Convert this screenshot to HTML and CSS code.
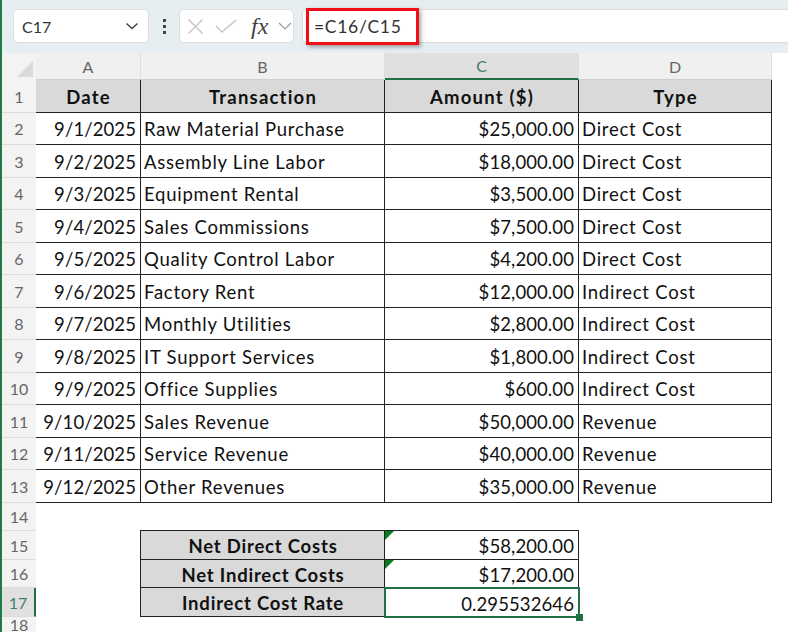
FILE: index.html
```html
<!DOCTYPE html>
<html lang="en">
<head>
    <meta charset="UTF-8">
    <title>Indirect Cost Rate</title>
    <link rel="stylesheet" href="styles.css">
</head>
<body>
    <div class="app">
        <div class="formula-bar">
            <div class="name-box">
                <span>C17</span>
                <svg class="chev" width="14" height="8" viewBox="0 0 14 8"><path d="M1.5 1.5 7 6.5l5.5-5" fill="none" stroke="#444" stroke-width="1.5"/></svg>
            </div>
            <div class="dots"><i></i><i></i><i></i></div>
            <div class="func-box">
                <svg width="17" height="17" viewBox="0 0 17 17"><path d="M1.5 1.5l14 14M15.500 1.500l-14 14" fill="none" stroke="#c4c4c4" stroke-width="1.4"/></svg>
                <svg class="check" width="24" height="16" viewBox="0 0 24 16"><path d="M2 8l6 6L22 2" fill="none" stroke="#c4c4c4" stroke-width="1.4"/></svg>
                <span class="fx">fx</span>
                <svg width="14" height="8" viewBox="0 0 14 8"><path d="M1 1l6 6 6-6" fill="none" stroke="#999" stroke-width="1.2"/></svg>
            </div>
            <div class="formula-box">
                <span class="formula">=C16/C15</span>
            </div>
        </div>

        <div class="sheet">
            <div class="corner"><svg width="16" height="16" viewBox="0 0 16 16"><path d="M16 0v16H0z" fill="#dadada"/></svg></div>
            <div class="col-head">A</div>
            <div class="col-head">B</div>
            <div class="col-head active">C</div>
            <div class="col-head">D</div>
            <div class="blank"></div>

            <div class="row-head">1</div>
            <div class="cell head">Date</div>
            <div class="cell head">Transaction</div>
            <div class="cell head">Amount ($)</div>
            <div class="cell head">Type</div>
            <div class="blank"></div>

            <div class="row-head">2</div>
            <div class="cell num">9/1/2025</div>
            <div class="cell">Raw Material Purchase</div>
            <div class="cell num">$25,000.00</div>
            <div class="cell">Direct Cost</div>
            <div class="blank"></div>

            <div class="row-head">3</div>
            <div class="cell num">9/2/2025</div>
            <div class="cell">Assembly Line Labor</div>
            <div class="cell num">$18,000.00</div>
            <div class="cell">Direct Cost</div>
            <div class="blank"></div>

            <div class="row-head">4</div>
            <div class="cell num">9/3/2025</div>
            <div class="cell">Equipment Rental</div>
            <div class="cell num">$3,500.00</div>
            <div class="cell">Direct Cost</div>
            <div class="blank"></div>

            <div class="row-head">5</div>
            <div class="cell num">9/4/2025</div>
            <div class="cell">Sales Commissions</div>
            <div class="cell num">$7,500.00</div>
            <div class="cell">Direct Cost</div>
            <div class="blank"></div>

            <div class="row-head">6</div>
            <div class="cell num">9/5/2025</div>
            <div class="cell">Quality Control Labor</div>
            <div class="cell num">$4,200.00</div>
            <div class="cell">Direct Cost</div>
            <div class="blank"></div>

            <div class="row-head">7</div>
            <div class="cell num">9/6/2025</div>
            <div class="cell">Factory Rent</div>
            <div class="cell num">$12,000.00</div>
            <div class="cell">Indirect Cost</div>
            <div class="blank"></div>

            <div class="row-head">8</div>
            <div class="cell num">9/7/2025</div>
            <div class="cell">Monthly Utilities</div>
            <div class="cell num">$2,800.00</div>
            <div class="cell">Indirect Cost</div>
            <div class="blank"></div>

            <div class="row-head">9</div>
            <div class="cell num">9/8/2025</div>
            <div class="cell">IT Support Services</div>
            <div class="cell num">$1,800.00</div>
            <div class="cell">Indirect Cost</div>
            <div class="blank"></div>

            <div class="row-head">10</div>
            <div class="cell num">9/9/2025</div>
            <div class="cell">Office Supplies</div>
            <div class="cell num">$600.00</div>
            <div class="cell">Indirect Cost</div>
            <div class="blank"></div>

            <div class="row-head">11</div>
            <div class="cell num">9/10/2025</div>
            <div class="cell">Sales Revenue</div>
            <div class="cell num">$50,000.00</div>
            <div class="cell">Revenue</div>
            <div class="blank"></div>

            <div class="row-head">12</div>
            <div class="cell num">9/11/2025</div>
            <div class="cell">Service Revenue</div>
            <div class="cell num">$40,000.00</div>
            <div class="cell">Revenue</div>
            <div class="blank"></div>

            <div class="row-head">13</div>
            <div class="cell num">9/12/2025</div>
            <div class="cell">Other Revenues</div>
            <div class="cell num">$35,000.00</div>
            <div class="cell">Revenue</div>
            <div class="blank"></div>

            <div class="row-head">14</div>
            <div class="blank wide"></div>

            <div class="row-head">15</div>
            <div class="blank"></div>
            <div class="cell head sum">Net Direct Costs</div>
            <div class="cell num sum flag">$58,200.00</div>
            <div class="blank span2"></div>

            <div class="row-head">16</div>
            <div class="blank"></div>
            <div class="cell head sum">Net Indirect Costs</div>
            <div class="cell num sum flag">$17,200.00</div>
            <div class="blank span2"></div>

            <div class="row-head selected">17</div>
            <div class="blank"></div>
            <div class="cell head sum">Indirect Cost Rate</div>
            <div class="cell num sum picked">0.295532646<b class="handle"></b></div>
            <div class="blank span2"></div>

            <div class="row-head">18</div>
            <div class="blank wide"></div>
        </div>
    </div>
</body>
</html>
```

FILE: styles.css
```css
html, body {
    margin: 0;
    padding: 0;
}
body {
    width: 788px;
    height: 632px;
    overflow: hidden;
    background-color: white;
    font-family: Lato, "Open Sans", sans-serif;
    color: #111;
}
.app {
    border-left: 2px solid #1f7a4a;
    height: 632px;
    box-sizing: border-box;
}
.formula-bar {
    height: 53px;
    box-sizing: border-box;
    padding: 9px 0 10px 11px;
    background-color: #e6eef1;
    display: flex;
    align-items: stretch;
}
.name-box {
    width: 136px;
    box-sizing: border-box;
    padding: 0 9px 0 8px;
    background-color: white;
    border: 1px solid #dcdfe0;
    border-radius: 5px;
    display: flex;
    align-items: center;
    justify-content: space-between;
    font-size: 16px;
    color: #333;
}
.dots {
    width: 30px;
    display: flex;
    flex-direction: column;
    align-items: center;
    justify-content: center;
    gap: 3px;
}
.dots i {
    width: 3px;
    height: 3px;
    background-color: #444;
}
.func-box {
    width: 115px;
    box-sizing: border-box;
    padding: 0 1px 0 7px;
    background-color: white;
    border: 1px solid #dcdfe0;
    border-radius: 5px;
    display: flex;
    align-items: center;
    justify-content: space-between;
}
.fx {
    font-family: "Liberation Serif", serif;
    font-style: italic;
    font-size: 24px;
    line-height: 1;
    color: #444;
    margin-left: 4px;
}
.formula-box {
    flex: 1;
    margin-left: 8px;
    padding-left: 3px;
    background-color: white;
    border-top: 1px solid #d8dcdd;
    border-bottom: 1px solid #d8dcdd;
    border-left: 1px solid #d8dcdd;
    border-radius: 5px 0 0 5px;
    display: flex;
    align-items: center;
}
.formula {
    width: 113px;
    height: 37px;
    box-sizing: border-box;
    padding-left: 5px;
    border: 3px solid #ee0f17;
    box-shadow: 2px 2px 4px rgba(0,0,0,0.35);
    display: flex;
    align-items: center;
    font-size: 17.5px;
    letter-spacing: 0.7px;
    color: #333;
}
.sheet {
    display: grid;
    grid-template-columns: 34px 105px 244px 194px 193px 18px;
    grid-template-rows: 27px 33px 32px 33px 32px 33px 32px 33px 32px 33px 32px 33px 32px 33px 28px 29px 28px 29px 16px;
}
.corner {
    background-color: #f3f3f3;
    display: flex;
    align-items: flex-end;
    justify-content: flex-end;
    padding: 0 3px 3px 0;
}
.col-head {
    background-color: #f0f0f0;
    border-right: 1px solid #dddddd;
    border-bottom: 1px solid #cfcfcf;
    display: flex;
    align-items: center;
    justify-content: center;
    font-size: 16px;
    color: #666;
}
.col-head.active {
    background-color: #e0e0e0;
    border-bottom: 2px solid #1f7145;
    color: #3f7f5f;
}
.row-head {
    background-color: #f3f3f3;
    border-bottom: 1px solid #dddddd;
    display: flex;
    align-items: center;
    justify-content: center;
    font-size: 16px;
    color: #666;
}
.row-head.selected {
    background-color: #e0e0e0;
    border-right: 2px solid #1f7145;
    color: #3f7f5f;
}
.cell {
    border-right: 1px solid #222;
    border-bottom: 1px solid #222;
    padding: 1px 2px 0 3px;
    display: flex;
    align-items: center;
    font-size: 18.5px;
    letter-spacing: 0.75px;
    white-space: nowrap;
    position: relative;
}
.head {
    background-color: #d9d9d9;
    justify-content: center;
    font-weight: bold;
    letter-spacing: 1.2px;
}
.num {
    justify-content: flex-end;
    padding-right: 4px;
    letter-spacing: 0.1px;
}
.sum {
    border-top: 1px solid #222;
    margin-top: -1px;
    padding-top: 2px;
}
.head.sum {
    border-left: 1px solid #222;
    margin-left: -1px;
    letter-spacing: 0.8px;
}
.flag::before {
    content: "";
    position: absolute;
    left: 0;
    top: 0;
    border-top: 9px solid #0a7a1e;
    border-right: 9px solid transparent;
}
.picked {
    border: 2px solid #1f7145;
    margin: -1px -1px -1px -1px;
}
.handle {
    position: absolute;
    right: -5px;
    bottom: -5px;
    width: 7px;
    height: 7px;
    background-color: #1f7145;
}
.blank {
    background-color: white;
}
.wide {
    grid-column: span 5;
}
.span2 {
    grid-column: span 2;
}
```
